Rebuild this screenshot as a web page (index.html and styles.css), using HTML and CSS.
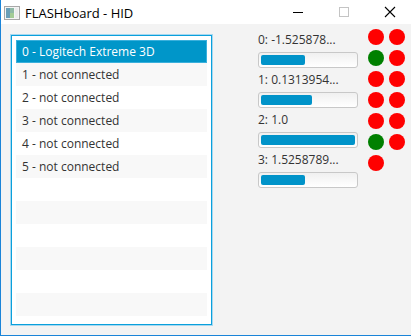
FILE: index.html
```html
<!DOCTYPE html>
<html>
<head>
<meta charset="utf-8">
<link rel="stylesheet" href="styles.css">
</head>
<body>
<div class="window">
  <div class="titlebar">
    <svg class="appicon" width="16" height="14" viewBox="0 0 16 14">
      <rect x="0.5" y="0.5" width="15" height="13" fill="#f4f4f4" stroke="#a8a8a8"/>
      <rect x="2" y="2" width="8" height="10" fill="#8fb9a6"/>
      <rect x="2" y="2" width="4" height="10" fill="#6a9fb8"/>
      <rect x="6" y="7" width="4" height="5" fill="#a3cc95"/>
      <rect x="11" y="2" width="3" height="10" fill="#ececec"/>
    </svg>
    <span class="title">FLASHboard - HID</span>
    <div class="controls">
      <svg width="46" height="24" viewBox="0 0 46 24"><line x1="18" y1="12.5" x2="28" y2="12.5" stroke="#000" stroke-width="1"/></svg>
      <svg width="46" height="24" viewBox="0 0 46 24"><rect x="18.5" y="7.5" width="9" height="9" fill="none" stroke="#c4c4c4"/></svg>
      <svg width="46" height="24" viewBox="0 0 46 24"><path d="M18 7 L28 17 M28 7 L18 17" stroke="#000" stroke-width="1.1"/></svg>
    </div>
  </div>
  <div class="content">
    <div class="listview">
      <div class="cell selected">0 - Logitech Extreme 3D</div>
      <div class="cell odd">1 - not connected</div>
      <div class="cell">2 - not connected</div>
      <div class="cell odd">3 - not connected</div>
      <div class="cell">4 - not connected</div>
      <div class="cell odd">5 - not connected</div>
      <div class="cell"></div>
      <div class="cell odd"></div>
      <div class="cell"></div>
      <div class="cell odd"></div>
      <div class="cell"></div>
      <div class="cell odd"></div>
    </div>
    <div class="axes">
      <div class="axis-label">0: -1.525878...</div>
      <div class="bar"><div class="fill" style="width:44px"></div></div>
      <div class="axis-label">1: 0.1313954...</div>
      <div class="bar"><div class="fill" style="width:51px"></div></div>
      <div class="axis-label">2: 1.0</div>
      <div class="bar"><div class="fill" style="width:94px"></div></div>
      <div class="axis-label">3: 1.5258789...</div>
      <div class="bar"><div class="fill" style="width:44px"></div></div>
    </div>
    <div class="buttons">
      <span class="dot red"></span><span class="dot red"></span>
      <span class="dot green"></span><span class="dot red"></span>
      <span class="dot red"></span><span class="dot red"></span>
      <span class="dot red"></span><span class="dot red"></span>
      <span class="dot red"></span><span class="dot red"></span>
      <span class="dot green"></span><span class="dot red"></span>
      <span class="dot red"></span>
    </div>
  </div>
</div>
</body>
</html>
```
FILE: styles.css
```css
html, body {
  margin: 0;
  padding: 0;
  width: 411px;
  height: 336px;
  overflow: hidden;
  background: #f3f3f3;
  font-family: "Open Sans", "Noto Sans", sans-serif;
}
.window {
  width: 411px;
  height: 336px;
  box-sizing: border-box;
  border-left: 1px solid #1a84d8;
  border-bottom: 1px solid #1a84d8;
  display: flex;
  flex-direction: column;
}
.titlebar {
  height: 24px;
  background: #fff;
  display: flex;
  align-items: center;
  flex: none;
}
.appicon {
  margin-left: 3px;
  margin-top: 2px;
}
.title {
  margin-left: 5px;
  font-size: 13px;
  color: #000;
  margin-top: 1px;
}
.controls {
  margin-left: auto;
  display: flex;
  margin-right: -2px;
}
.controls svg { display: block; }
.content {
  flex: 1;
  background: #f3f3f3;
  display: flex;
  align-items: flex-start;
  padding: 11px 0 0 10px;
}
.listview {
  border: 1px solid #0aa0dc;
  box-shadow: 0 0 0 1px #a6d8f0;
  background: #fff;
  padding: 4px 4px 0 4px;
  box-sizing: border-box;
  width: 201px;
  height: 290px;
  overflow: hidden;
}
.cell {
  height: 23px;
  line-height: 23px;
  font-size: 12px;
  color: #333;
  padding-left: 6px;
  box-sizing: border-box;
  white-space: nowrap;
}
.cell.odd { background: #f8f8f8; }
.cell.selected {
  background: #0096c9;
  color: #fff;
  box-shadow: inset 0 0 0 1px #3ab0dc;
}
.axes {
  margin-left: 46px;
  margin-top: -7px;
  width: 100px;
  display: flex;
  flex-direction: column;
}
.axis-label {
  height: 24px;
  line-height: 24px;
  font-size: 12px;
  color: #333;
  white-space: nowrap;
}
.bar {
  height: 16px;
  box-sizing: border-box;
  border: 1px solid #c8c8c8;
  border-radius: 3px;
  background: linear-gradient(#f0f0f0, #ffffff);
  padding: 2px;
}
.fill {
  height: 100%;
  background: #0093c9;
  border-radius: 2px;
}
.buttons {
  margin-left: 10px;
  margin-top: -6px;
  display: grid;
  grid-template-columns: 16px 16px;
  column-gap: 5px;
  row-gap: 5px;
}
.dot {
  width: 16px;
  height: 16px;
  border-radius: 50%;
  display: block;
}
.dot.red { background: #ff0000; }
.dot.green { background: #008000; }
```
